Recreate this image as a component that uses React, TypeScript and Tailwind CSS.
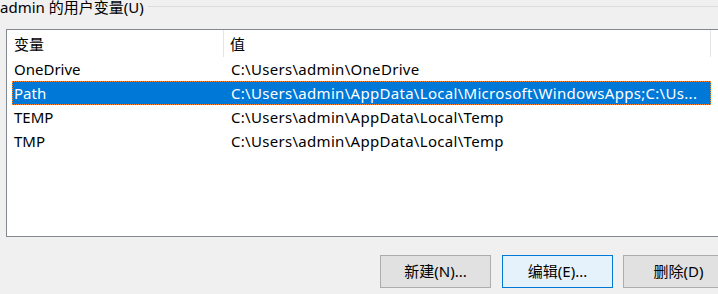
const font = {
  fontFamily: '"Noto Sans", "Noto Sans CJK SC", sans-serif',
};

const rows = [
  { name: "OneDrive", value: "C:\\Users\\admin\\OneDrive" },
  {
    name: "Path",
    value: "C:\\Users\\admin\\AppData\\Local\\Microsoft\\WindowsApps;C:\\Us...",
    selected: true,
  },
  { name: "TEMP", value: "C:\\Users\\admin\\AppData\\Local\\Temp" },
  { name: "TMP", value: "C:\\Users\\admin\\AppData\\Local\\Temp" },
];

const App = () => {
  return (
    <div
      className="w-[718px] h-[294px] bg-[#f0f0f0] overflow-hidden text-[15px] text-black"
      style={font}
    >
      {/* group title */}
      <div className="flex items-start h-[14px]">
        <span className="leading-[14px] whitespace-nowrap">admin 的用户变量(U)</span>
        <div className="flex-1 h-px bg-[#dcdcdc] mt-[6px] ml-[4px]" />
      </div>

      {/* list view */}
      <div className="mt-[15px] ml-[6px] w-[740px] h-[208px] border border-[#828790] bg-white">
        <div className="flex h-[27px] pl-[5px] items-center">
          <div className="w-[212px] h-full flex items-center pl-[2px] pt-[2px] border-r border-[#e5e5e5]">
            变量
          </div>
          <div className="w-[487px] h-full flex items-center pl-[6px] pt-[2px] border-r border-[#e5e5e5]">
            值
          </div>
        </div>
        <div className="pl-[5px]">
          {rows.map((r) => (
            <div
              key={r.name}
              className={
                r.selected
                  ? "flex h-[24px] w-[699px] items-center bg-[#0078d7] text-white border border-dotted border-[#ff8728]"
                  : "flex h-[24px] w-[699px] items-center border border-transparent"
              }
            >
              <div className="w-[211px] pl-[1px] whitespace-nowrap">{r.name}</div>
              <div className="pl-[7px] whitespace-nowrap tracking-[0.3px]">{r.value}</div>
            </div>
          ))}
        </div>
      </div>

      {/* buttons */}
      <div className="flex mt-[18px] pl-[380px] gap-[11px]">
        <button className="shrink-0 w-[111px] h-[33px] bg-[#e1e1e1] border border-[#adadad]">
          新建(N)...
        </button>
        <button className="shrink-0 w-[111px] h-[33px] bg-[#e5f1fb] border border-[#0078d7]">
          编辑(E)...
        </button>
        <button className="shrink-0 w-[111px] h-[33px] bg-[#e1e1e1] border border-[#adadad] -ml-px">
          删除(D)
        </button>
      </div>
    </div>
  );
};

export default App;
